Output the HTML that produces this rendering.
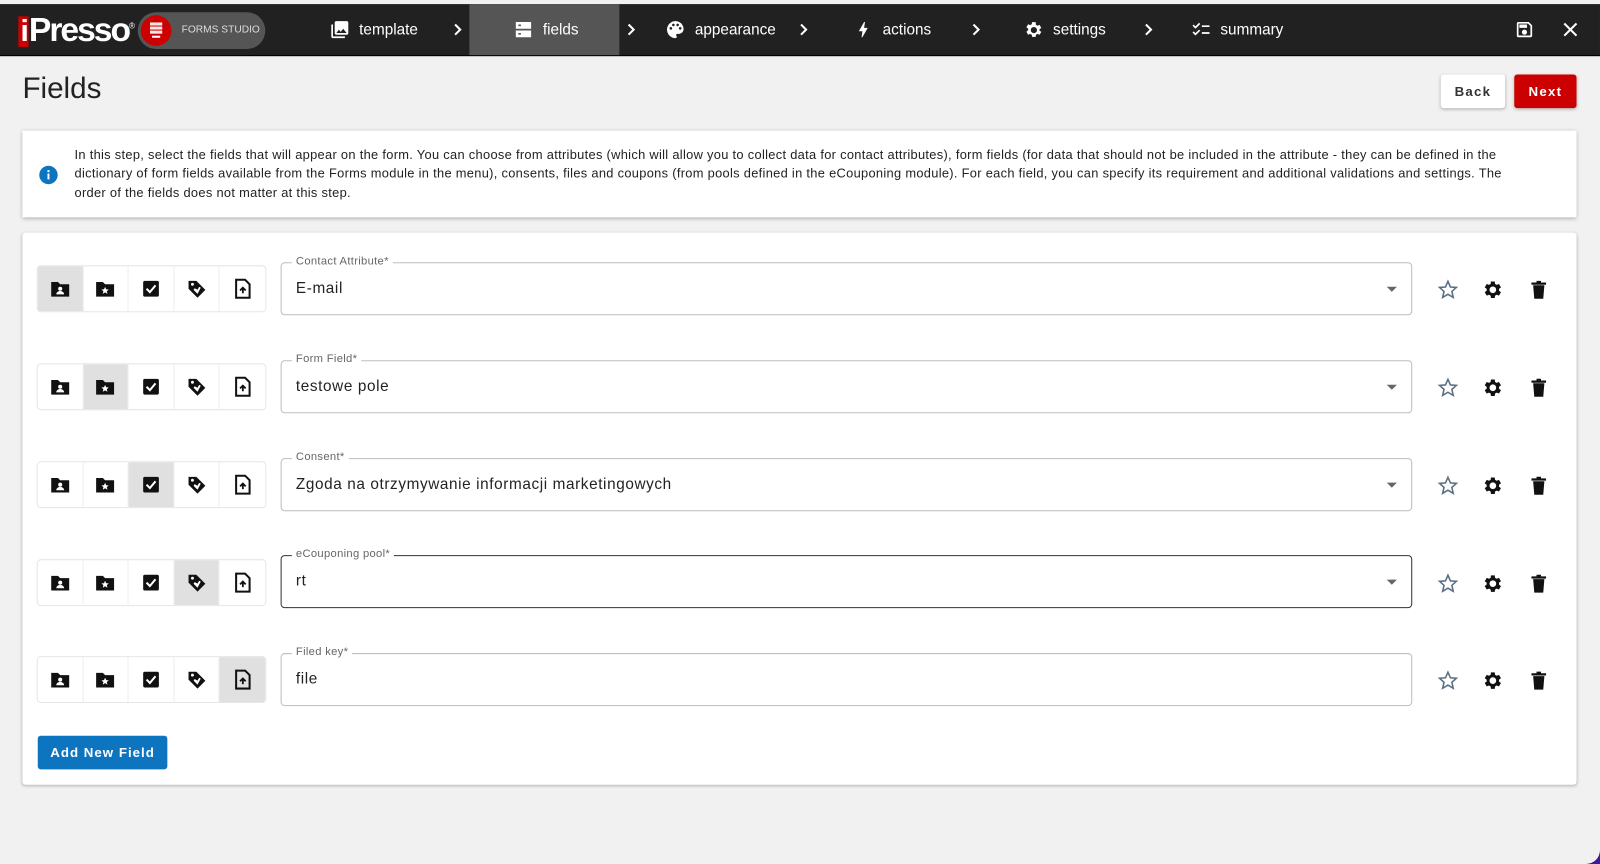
<!DOCTYPE html>
<html><head><meta charset="utf-8"><style>
*{box-sizing:border-box;margin:0;padding:0}
body{width:1600px;height:864px;overflow:hidden;background:#3b1a9e;font-family:"Liberation Sans",Arial,sans-serif;color:#222}
.bg{position:absolute;left:0;top:0;width:1600px;height:864px;background:#f1f1f1;border-bottom-right-radius:14px}
.page{position:absolute;left:0;top:0;width:1568px;height:847px;transform:scale(1.0204);transform-origin:0 0}
.top{position:absolute;left:0;top:4px;width:1568px;height:51px;background:#212121;color:#fff;border-bottom:1px solid #000}
.logo{position:absolute;left:18px;top:6px;font-size:33px;font-weight:bold;letter-spacing:-2px;color:#fff}
.logo i{font-style:normal;background:#c00;padding:0 2px;display:inline-block;height:30px;line-height:30px;margin-top:6px;vertical-align:top;font-size:30px}
.pill{position:absolute;left:135px;top:8px;width:125px;height:36px;border-radius:18px;background:#555}
.pill .c{position:absolute;left:3px;top:3px;width:30px;height:30px;border-radius:50%;background:#c00}
.pill span{position:absolute;left:43px;top:12px;font-size:10px;color:#ddd;white-space:nowrap}
.nav{position:absolute;top:0;height:50px;display:flex;align-items:center;font-size:15px;color:#fff}
.nav svg{margin-right:9px}
.chev{position:absolute;top:16px}
.sel{position:absolute;left:460px;top:0;width:147px;height:50px;background:#555}
h1{position:absolute;left:22px;top:71px;font-size:29px;font-weight:normal;color:#222}
.btn{position:absolute;top:73px;height:33px;border-radius:3px;font-size:13px;font-weight:bold;letter-spacing:1.2px;display:flex;align-items:center;justify-content:center;box-shadow:0 1px 3px rgba(0,0,0,.25)}
.info{position:absolute;left:22px;top:128px;width:1523px;height:85px;background:#fff;box-shadow:0 1px 4px rgba(0,0,0,.3);font-size:12.6px;line-height:18.3px;letter-spacing:.3px;color:#222;padding:15px 50px 0 51px}
.card{position:absolute;left:22px;top:228px;width:1523px;height:541px;background:#fff;border-radius:3px;box-shadow:0 1px 3px rgba(0,0,0,.25)}
.grp{position:absolute;left:14px;width:225px;height:46px;border:1px solid #e6e6e6;border-radius:4px;display:flex;overflow:hidden}
.grp div{width:45px;height:100%;display:flex;align-items:center;justify-content:center;border-right:1px solid #eee}
.grp div:last-child{border-right:none}
.grp .on{background:#e0e0e0}
.fld{position:absolute;left:253px;width:1109px;height:52px;border:1px solid #bdbdbd;border-radius:4px}
.fld label{position:absolute;left:10px;top:-8px;background:#fff;padding:0 4px;font-size:11px;color:#666;letter-spacing:.3px}
.fld .v{position:absolute;left:14px;top:16px;font-size:15px;letter-spacing:.6px;color:#222}
.fld .dd{position:absolute;right:14px;top:23px;border-left:5px solid transparent;border-right:5px solid transparent;border-top:5px solid #666}
.acts{position:absolute;left:1386px;width:120px;height:30px}
.add{position:absolute;left:15px;top:493px;width:127px;height:33px;background:#0d74c0;color:#fff;border-radius:3px;font-size:13px;font-weight:bold;letter-spacing:1px;display:flex;align-items:center;justify-content:center}
</style></head><body><div class="bg"></div><div class="page">
<div class="top">
<div class="logo"><i>i</i>Presso<sup style="font-size:8px;font-weight:normal">®</sup></div>
<div class="pill"><div class="c"><svg width="30" height="30"><rect x="9" y="7" width="12" height="3" fill="#fff" opacity=".9"/><rect x="9" y="11" width="12" height="3" fill="#fff" opacity=".9"/><rect x="9" y="15" width="12" height="3" fill="#fff" opacity=".9"/><rect x="11" y="20" width="8" height="2" fill="#fff"/></svg></div><span>FORMS STUDIO</span></div>
<div class="sel"></div>
<div class="nav" style="left:323px"><svg width="20" height="20" viewBox="0 0 24 24"><path fill="#fff" d="M22 16V4a2 2 0 0 0-2-2H8a2 2 0 0 0-2 2v12a2 2 0 0 0 2 2h12a2 2 0 0 0 2-2zm-11-4 2 2.7 3-3.7 4 5H8l3-4zM2 6v14a2 2 0 0 0 2 2h14v-2H4V6H2z"/></svg>template</div>
<div class="nav" style="left:503px"><svg width="20" height="20" viewBox="0 0 24 24"><path fill="#fff" d="M3 3h18v8H3zM3 13h18v8H3z"/><rect x="6" y="6" width="3" height="2" fill="#555"/><rect x="6" y="16" width="3" height="2" fill="#555"/></svg>fields</div>
<div class="nav" style="left:652px"><svg width="20" height="20" viewBox="0 0 24 24"><path fill="#fff" d="M12 2C6.5 2 2 6.5 2 12s4.5 10 10 10c.9 0 1.5-.7 1.5-1.5 0-.4-.1-.7-.4-1-.2-.3-.4-.6-.4-1 0-.8.7-1.5 1.5-1.5H16c3 0 5.5-2.5 5.5-5.5C21.5 6 17.2 2 12 2zm-5.5 10a1.5 1.5 0 1 1 0-3 1.5 1.5 0 0 1 0 3zm3-4a1.5 1.5 0 1 1 0-3 1.5 1.5 0 0 1 0 3zm5 0a1.5 1.5 0 1 1 0-3 1.5 1.5 0 0 1 0 3zm3 4a1.5 1.5 0 1 1 0-3 1.5 1.5 0 0 1 0 3z"/></svg>appearance</div>
<div class="nav" style="left:836px"><svg width="20" height="20" viewBox="0 0 24 24"><path fill="#fff" d="M11 21h-1l1-7H7.5c-.6 0-.6-.3-.4-.6L13 3h1l-1 7h3.5c.5 0 .6.3.4.6z"/></svg>actions</div>
<div class="nav" style="left:1002px"><svg width="21" height="21" viewBox="0 0 24 24"><path fill="#fff" d="M19.1 12.9a7 7 0 0 0 0-1.8l2-1.6-2-3.4-2.4 1a7 7 0 0 0-1.6-.9L14.8 3h-4l-.4 2.5a7 7 0 0 0-1.6.9l-2.4-1-2 3.4 2 1.6a7 7 0 0 0 0 1.8l-2 1.6 2 3.4 2.4-1c.5.4 1 .7 1.6.9l.4 2.5h4l.4-2.5c.6-.2 1.100-.5 1.6-.9l2.4 1 2-3.4zM12.8 15.5a3.5 3.5 0 1 1 0-7 3.5 3.5 0 0 1 0 7z"/></svg>settings</div>
<div class="nav" style="left:1167px"><svg width="20" height="20" viewBox="0 0 24 24"><path fill="#fff" d="M22 7h-9v2h9zm0 8h-9v2h9zM5.5 11 2 7.5 3.4 6.1l2.1 2.1 4.2-4.2 1.4 1.4zm0 8L2 15.5l1.4-1.4 2.1 2.1 4.2-4.2 1.4 1.4z"/></svg>summary</div>
<svg class="chev" style="left:442px" width="14" height="18" viewBox="0 0 14 18"><path d="M4 4l5 5-5 5" stroke="#fff" stroke-width="2" fill="none"/></svg>
<svg class="chev" style="left:612px" width="14" height="18" viewBox="0 0 14 18"><path d="M4 4l5 5-5 5" stroke="#fff" stroke-width="2" fill="none"/></svg>
<svg class="chev" style="left:781px" width="14" height="18" viewBox="0 0 14 18"><path d="M4 4l5 5-5 5" stroke="#fff" stroke-width="2" fill="none"/></svg>
<svg class="chev" style="left:950px" width="14" height="18" viewBox="0 0 14 18"><path d="M4 4l5 5-5 5" stroke="#fff" stroke-width="2" fill="none"/></svg>
<svg class="chev" style="left:1119px" width="14" height="18" viewBox="0 0 14 18"><path d="M4 4l5 5-5 5" stroke="#fff" stroke-width="2" fill="none"/></svg>
<svg style="position:absolute;left:1484px;top:15px" width="20" height="20" viewBox="0 0 24 24"><path fill="#fff" d="M17 3H5a2 2 0 0 0-2 2v14a2 2 0 0 0 2 2h14a2 2 0 0 0 2-2V7zm2 16H5V5h11.2L19 7.8zM12 12a3 3 0 1 0 0 6 3 3 0 0 0 0-6zM6 6h9v4H6z"/></svg>
<svg style="position:absolute;left:1530px;top:16px" width="18" height="18" viewBox="0 0 18 18"><path d="M3 3l12 12M15 3L3 15" stroke="#fff" stroke-width="2"/></svg>
</div>
<h1>Fields</h1>
<div class="btn" style="left:1412px;width:63px;background:#fff;color:#333">Back</div>
<div class="btn" style="left:1484px;width:61px;background:#c00;color:#fff">Next</div>
<div class="info">In this step, select the fields that will appear on the form. You can choose from attributes (which will allow you to collect data for contact attributes), form fields (for data that should not be included in the attribute - they can be defined in the dictionary of form fields available from the Forms module in the menu), consents, files and coupons (from pools defined in the eCouponing module). For each field, you can specify its requirement and additional validations and settings. The order of the fields does not matter at this step.</div>
<svg style="position:absolute;left:38px;top:162px" width="19" height="19" viewBox="0 0 20 20"><circle cx="10" cy="10" r="9.5" fill="#0d74c0"/><rect x="9" y="8.5" width="2" height="6" fill="#fff"/><circle cx="10" cy="6" r="1.2" fill="#fff"/></svg>
<div class="card">
<svg width="0" height="0" style="position:absolute"><defs>
<g id="i1"><path d="M2 4h6l2 2h8v11H2z" fill="#111"/><circle cx="10" cy="10" r="1.8" fill="#fff"/><path d="M6.5 15c0-2 2-3 3.5-3s3.5 1 3.5 3z" fill="#fff"/></g>
<g id="i2"><path d="M2 4h6l2 2h8v11H2z" fill="#111"/><path d="M10 8.3l1 2.2 2.3.2-1.8 1.5.6 2.3-2.1-1.3-2.1 1.3.6-2.3-1.8-1.5 2.3-.2z" fill="#fff"/></g>
<g id="i3"><rect x="3" y="3" width="14" height="14" rx="1.5" fill="#111"/><path d="M6 10l3 3 5-6" stroke="#fff" stroke-width="1.8" fill="none"/></g>
<g id="i4"><path d="M3 3h6.5l8 8-7 7-8-8V3z" fill="#111"/><circle cx="6" cy="6" r="1.3" fill="#fff"/><path d="M10.5 14.5l-3-3c-.8-.8 0-2.2 1.2-1.6l1.8 1 1-1.8c.6-1.2 2.1-.6 1.6.6z" fill="#fff"/></g>
<g id="i5"><path d="M4 2h8l4 4v12H4z" fill="none" stroke="#111" stroke-width="1.8"/><path d="M10 14V9M7.5 11.5L10 9l2.5 2.5" stroke="#111" stroke-width="1.6" fill="none"/></g>
<g id="star"><path d="M10 2.5l2.2 5 5.3.4-4 3.6 1.2 5.3L10 14l-4.7 2.8 1.2-5.3-4-3.6 5.3-.4z" fill="none" stroke="#5a6f84" stroke-width="1.4"/></g>
<g id="gear"><path d="M16.5 10.8a6.5 6.5 0 0 0 0-1.6l1.8-1.4-1.8-3-2.1.8a6 6 0 0 0-1.4-.8L12.7 2.6h-3.4l-.3 2.2a6 6 0 0 0-1.4.8l-2.1-.8-1.8 3 1.8 1.4a6.5 6.5 0 0 0 0 1.6l-1.8 1.4 1.8 3 2.1-.8c.4.3.9.6 1.4.8l.3 2.2h3.4l.3-2.2c.5-.2 1-.5 1.4-.8l2.1.8 1.8-3zM11 13a3 3 0 1 1 0-6 3 3 0 0 1 0 6z" fill="#111"/></g>
<g id="trash"><path d="M5 6h10l-1 12H6z M3.5 3.5h13v2h-13z M8 2h4v2H8z" fill="#111"/></g>
</defs></svg>
<div class="grp" style="top:32px"><div class="on"><svg width="22" height="22" viewBox="0 0 20 20"><use href="#i1"/></svg></div><div><svg width="22" height="22" viewBox="0 0 20 20"><use href="#i2"/></svg></div><div><svg width="22" height="22" viewBox="0 0 20 20"><use href="#i3"/></svg></div><div><svg width="22" height="22" viewBox="0 0 20 20"><use href="#i4"/></svg></div><div><svg width="22" height="22" viewBox="0 0 20 20"><use href="#i5"/></svg></div></div>
<div class="fld" style="top:29px"><label>Contact Attribute*</label><div class="v">E-mail</div><div class="dd"></div></div>
<div class="acts" style="top:45px"><svg width="22" height="22" viewBox="0 0 20 20" style="position:absolute;left:0"><use href="#star"/></svg><svg width="24" height="22" viewBox="0 0 22 20" style="position:absolute;left:43px"><use href="#gear"/></svg><svg width="22" height="22" viewBox="0 0 20 20" style="position:absolute;left:89px"><use href="#trash"/></svg></div>

<div class="grp" style="top:128px"><div><svg width="22" height="22" viewBox="0 0 20 20"><use href="#i1"/></svg></div><div class="on"><svg width="22" height="22" viewBox="0 0 20 20"><use href="#i2"/></svg></div><div><svg width="22" height="22" viewBox="0 0 20 20"><use href="#i3"/></svg></div><div><svg width="22" height="22" viewBox="0 0 20 20"><use href="#i4"/></svg></div><div><svg width="22" height="22" viewBox="0 0 20 20"><use href="#i5"/></svg></div></div>
<div class="fld" style="top:125px"><label>Form Field*</label><div class="v">testowe pole</div><div class="dd"></div></div>
<div class="acts" style="top:141px"><svg width="22" height="22" viewBox="0 0 20 20" style="position:absolute;left:0"><use href="#star"/></svg><svg width="24" height="22" viewBox="0 0 22 20" style="position:absolute;left:43px"><use href="#gear"/></svg><svg width="22" height="22" viewBox="0 0 20 20" style="position:absolute;left:89px"><use href="#trash"/></svg></div>

<div class="grp" style="top:224px"><div><svg width="22" height="22" viewBox="0 0 20 20"><use href="#i1"/></svg></div><div><svg width="22" height="22" viewBox="0 0 20 20"><use href="#i2"/></svg></div><div class="on"><svg width="22" height="22" viewBox="0 0 20 20"><use href="#i3"/></svg></div><div><svg width="22" height="22" viewBox="0 0 20 20"><use href="#i4"/></svg></div><div><svg width="22" height="22" viewBox="0 0 20 20"><use href="#i5"/></svg></div></div>
<div class="fld" style="top:221px"><label>Consent*</label><div class="v">Zgoda na otrzymywanie informacji marketingowych</div><div class="dd"></div></div>
<div class="acts" style="top:237px"><svg width="22" height="22" viewBox="0 0 20 20" style="position:absolute;left:0"><use href="#star"/></svg><svg width="24" height="22" viewBox="0 0 22 20" style="position:absolute;left:43px"><use href="#gear"/></svg><svg width="22" height="22" viewBox="0 0 20 20" style="position:absolute;left:89px"><use href="#trash"/></svg></div>

<div class="grp" style="top:320px"><div><svg width="22" height="22" viewBox="0 0 20 20"><use href="#i1"/></svg></div><div><svg width="22" height="22" viewBox="0 0 20 20"><use href="#i2"/></svg></div><div><svg width="22" height="22" viewBox="0 0 20 20"><use href="#i3"/></svg></div><div class="on"><svg width="22" height="22" viewBox="0 0 20 20"><use href="#i4"/></svg></div><div><svg width="22" height="22" viewBox="0 0 20 20"><use href="#i5"/></svg></div></div>
<div class="fld" style="top:316px;border-color:#333"><label>eCouponing pool*</label><div class="v">rt</div><div class="dd"></div></div>
<div class="acts" style="top:333px"><svg width="22" height="22" viewBox="0 0 20 20" style="position:absolute;left:0"><use href="#star"/></svg><svg width="24" height="22" viewBox="0 0 22 20" style="position:absolute;left:43px"><use href="#gear"/></svg><svg width="22" height="22" viewBox="0 0 20 20" style="position:absolute;left:89px"><use href="#trash"/></svg></div>

<div class="grp" style="top:415px"><div><svg width="22" height="22" viewBox="0 0 20 20"><use href="#i1"/></svg></div><div><svg width="22" height="22" viewBox="0 0 20 20"><use href="#i2"/></svg></div><div><svg width="22" height="22" viewBox="0 0 20 20"><use href="#i3"/></svg></div><div><svg width="22" height="22" viewBox="0 0 20 20"><use href="#i4"/></svg></div><div class="on"><svg width="22" height="22" viewBox="0 0 20 20"><use href="#i5"/></svg></div></div>
<div class="fld" style="top:412px"><label>Filed key*</label><div class="v">file</div></div>
<div class="acts" style="top:428px"><svg width="22" height="22" viewBox="0 0 20 20" style="position:absolute;left:0"><use href="#star"/></svg><svg width="24" height="22" viewBox="0 0 22 20" style="position:absolute;left:43px"><use href="#gear"/></svg><svg width="22" height="22" viewBox="0 0 20 20" style="position:absolute;left:89px"><use href="#trash"/></svg></div>

<div class="add">Add New Field</div>
</div>
</div></body></html>
